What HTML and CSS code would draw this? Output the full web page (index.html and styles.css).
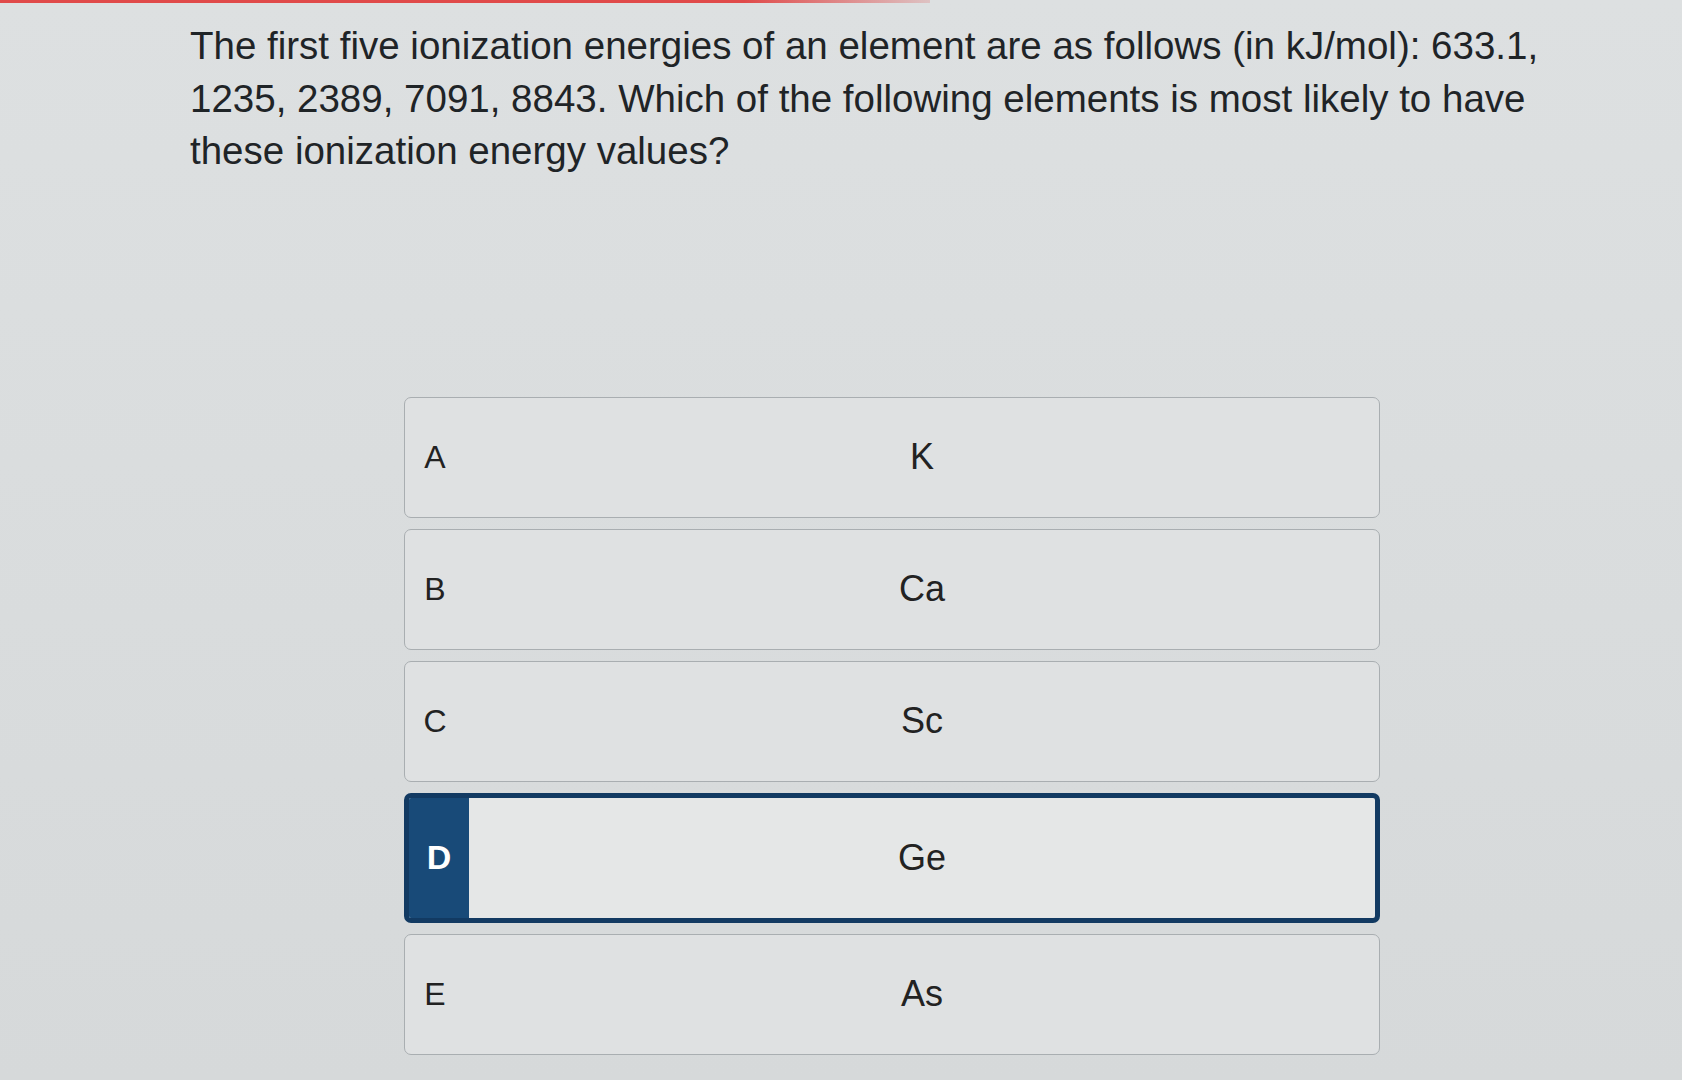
FILE: index.html
```html
<!DOCTYPE html>
<html lang="en">
<head>
    <meta charset="UTF-8">
    <meta name="viewport" content="width=device-width, initial-scale=1.0">
    <title>Ionization Energy Question</title>
    <link rel="stylesheet" href="styles.css">
</head>
<body>
    <div class="topbar"></div>
    <p class="question">The first five ionization energies of an element are as follows (in kJ/mol): 633.1, 1235, 2389, 7091, 8843. Which of the following elements is most likely to have these ionization energy values?</p>
    <div class="options">
        <div class="option">
            <span class="label">A</span>
            <span class="answer">K</span>
        </div>
        <div class="option">
            <span class="label">B</span>
            <span class="answer">Ca</span>
        </div>
        <div class="option">
            <span class="label">C</span>
            <span class="answer">Sc</span>
        </div>
        <div class="option selected">
            <span class="label">D</span>
            <span class="answer">Ge</span>
        </div>
        <div class="option">
            <span class="label">E</span>
            <span class="answer">As</span>
        </div>
    </div>
</body>
</html>
```

FILE: styles.css
```css
body {
    margin: 0;
    font-family: "Liberation Sans", Arial, sans-serif;
    background: linear-gradient(180deg, #dde0e1 0%, #d6d9da 100%);
    color: #1f2427;
    min-height: 100vh;
}

.topbar {
    width: 930px;
    height: 3px;
    background: linear-gradient(90deg, #e04a4a 80%, rgba(224, 74, 74, 0.2));
}

.question {
    margin: 17px 0 0 190px;
    width: 1400px;
    font-size: 38.5px;
    line-height: 52.5px;
}

.options {
    margin: 219px 0 0 404px;
    width: 976px;
    display: flex;
    flex-direction: column;
    gap: 11px;
}

.option {
    display: grid;
    grid-template-columns: 60px 1fr;
    height: 121px;
    box-sizing: border-box;
    border: 1.5px solid #a9aeb1;
    border-radius: 7px;
    background: #dfe1e2;
    overflow: hidden;
}

.label,
.answer {
    display: flex;
    align-items: center;
    justify-content: center;
    font-size: 32px;
    color: #222;
}

.answer {
    font-size: 36px;
}

/* Selected answer */
.option.selected {
    height: 130px;
    border: 5px solid #123a62;
    background: #e5e7e7;
}

.option.selected .label {
    background: #184a78;
    color: #fff;
    font-weight: bold;
    font-size: 34px;
}
```
